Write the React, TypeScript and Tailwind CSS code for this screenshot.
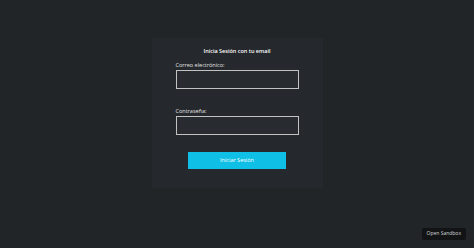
export default function App() {
  return (
    <div
      className="relative flex h-[248px] w-full justify-center bg-[#212528] pt-[38px]"
      style={{ fontFamily: '"Open Sans", "Noto Sans", sans-serif' }}
    >
      <div className="flex h-[150px] w-[171px] flex-col bg-[#25282c] px-[24px] pt-[9px]">
        <h1 className="text-center text-[5.5px] font-semibold leading-[8px] text-white">
          Inicia Sesión con tu email
        </h1>

        <label className="mt-[6px] mb-[1px] block text-[5.5px] leading-[8px] text-[#e2e2e2]">
          Correo electrónico:
        </label>
        <input
          type="email"
          className="h-[19px] w-full border border-[#c2c2c2] bg-[#282b2f] outline-none"
        />

        <label className="mt-[18px] mb-[1px] block text-[5.5px] leading-[8px] text-[#e2e2e2]">
          Contraseña:
        </label>
        <input
          type="password"
          className="h-[19px] w-full border border-[#c2c2c2] bg-[#282b2f] outline-none"
        />

        <button className="mx-auto mt-[17px] h-[17px] w-[98px] bg-[#0fbfe6] text-[5.5px] text-white">
          Iniciar Sesión
        </button>
      </div>

      <button className="absolute right-[8px] bottom-[8px] h-[12px] rounded-[2px] bg-[#111315] px-[5px] text-[5px] text-[#d6d6d6]">
        Open Sandbox
      </button>
    </div>
  );
}
